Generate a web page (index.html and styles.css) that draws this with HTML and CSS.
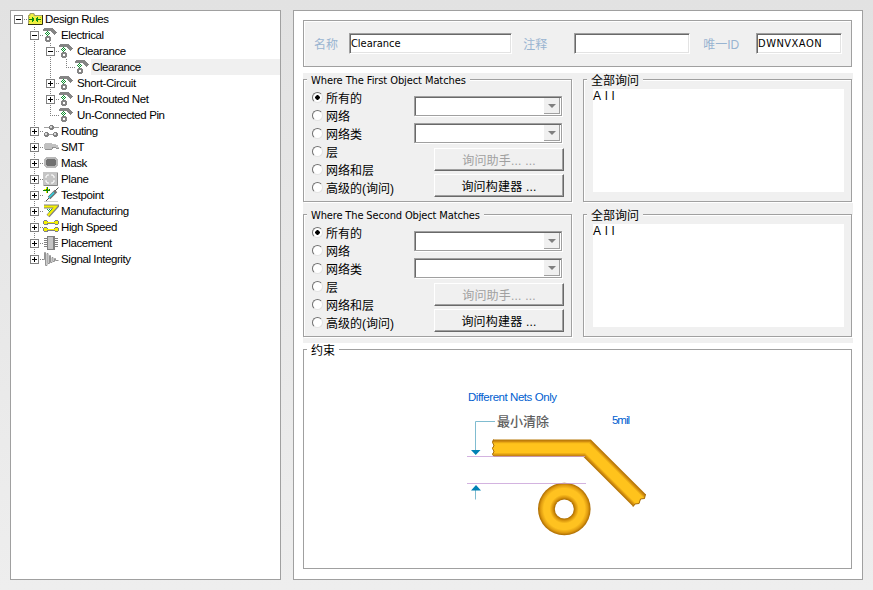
FILE: index.html
```html
<!DOCTYPE html>
<html lang="zh-CN">
<head>
    <meta charset="UTF-8">
    <title>Design Rules</title>
    <link rel="stylesheet" href="styles.css">
</head>
<body>

    <!-- Icon set -->
    <svg class="icon-defs" width="0" height="0" shape-rendering="crispEdges">
        <symbol id="ic-folder" viewBox="0 0 16 16">
            <path d="M1 14V4h1V3h1V2h4v1h1v1h7v10z" fill="#f0f040"/>
            <path d="M1.500 13V4.500H3V2.500h4V4.500h8" fill="none" stroke="#a0a070"/>
            <path d="M1 13.500h14.500V4" fill="none" stroke="#303010"/>
            <path d="M2 8.500h5M9 8.500h5" stroke="#008000"/>
            <path d="M5 6h1v1h1v3H6v1H5zM11 6h-1v1H9v3h1v1h1z" fill="#109010"/>
            <path d="M2 6h1v1H2zM13 6h1v1h-1zM2 10h1v1H2zM13 10h1v1h-1z" fill="#c0c010"/>
        </symbol>
        <symbol id="ic-clear" viewBox="0 0 16 16">
            <path d="M1 1h9v1h1v1h1v1h1v1h1v1h-1v1h-1v1h-1V7h-1V6H9V5H8V4H0V2h1z" fill="#858585"/>
            <path d="M4 4h1v1H4zM3 5h1v1H3zM5 5h1v1H5zM2 6h1v1H2zM4 6h1v1H4zM6 6h1v1H6zM3 7h1v1H3zM5 7h1v1H5zM4 8h1v1H4z" fill="#109030"/>
            <path d="M3 9h4v1h1v4H7v1H3v-1H2v-4h1zM4 11v2h2v-2z" fill="#858585" fill-rule="evenodd"/>
        </symbol>
        <symbol id="ic-routing" viewBox="0 0 16 16">
            <path d="M1 4h15v1H1zM4 11h8v1H4z" fill="#a0a0a0"/>
            <path d="M7 2h3v1h1v3h-1v1H7V6H6V3h1zM2 9h3v1h1v3H5v1H2v-1H1v-3h1zM11 9h3v1h1v3h-1v1h-3v-1h-1v-3h1z" fill="#808080"/>
            <path d="M7 3h2v2H7zM2 10h2v2H2zM11 10h2v2h-2z" fill="#d8d8d8"/>
        </symbol>
        <symbol id="ic-smt" viewBox="0 0 16 16">
            <path d="M2 4h7v1h4v1h2v2h1v2h-2V9h-2V8h-2v2H9v1H2v-1H1V5h1z" fill="#c0c0c0"/>
            <path d="M2 10.500h7M10 8.500h3M13 9.500h3M9.500 8v2" stroke="#909090"/>
        </symbol>
        <symbol id="ic-mask" viewBox="0 0 16 16">
            <path d="M3 2h10v1h1v1h1v7h-1v1h-1v1H3v-1H2v-1H1V4h1V3h1z" fill="#b8b8b8"/>
            <path d="M4 4h8v1h1v5h-1v1H4v-1H3V5h1z" fill="#707070"/>
        </symbol>
        <symbol id="ic-plane" viewBox="0 0 16 16">
            <rect x="0" y="1" width="15" height="14" fill="#c4c4c4"/>
            <path d="M14.500 2v12.500H1" fill="none" stroke="#888"/>
            <path d="M3 7V5h1V4h2M8 4h2v1h1v2M11 9v2h-1v1H8M6 12H4v-1H3V9" fill="none" stroke="#fff"/>
        </symbol>
        <symbol id="ic-test" viewBox="0 0 16 16">
            <path d="M3 0h2v2h2v2H5v2H3V4H0V3h3z" fill="#108010"/>
            <path d="M1 2h2v1H1zM3 0h1v2H3zM5 2h1v1H5zM3 4h1v2H3z" fill="#f0f000"/>
            <path d="M2.500 14.500L7 10M12 4l3.500-3.500" stroke="#505050" fill="none" shape-rendering="auto"/>
            <path d="M6 11l7-7" stroke="#707070" stroke-width="3.500" shape-rendering="auto"/>
            <path d="M6 10.500l5-5" stroke="#30d0e0" stroke-width="1.700" shape-rendering="auto"/>
            <path d="M1 14.500h14" stroke="#d0d0d0"/>
        </symbol>
        <symbol id="ic-manuf" viewBox="0 0 16 16">
            <path d="M1 3.500h12.500L5 13" fill="none" stroke="#808080" stroke-width="4" shape-rendering="auto"/>
            <path d="M1 3.500h12L5 12.500" fill="none" stroke="#f4f000" stroke-width="2" shape-rendering="auto"/>
            <path d="M4 6h1v1H4zM6 6h1v1H6zM8 6h1v1H8zM5 7h1v1H5zM7 7h1v1H7zM6 8h1v1H6z" fill="#20a050"/>
        </symbol>
        <symbol id="ic-speed" viewBox="0 0 16 16">
            <path d="M1 1h3v1h1v1h6V2h1V1h3v1h1v3h-1v1h-3V5H5v1H1V5H0V2h1zM1 8h3v1h1v1h6V9h1V8h3v1h1v3h-1v1h-3v-1H5v1H1v-1H0V9h1z" fill="#808080"/>
            <path d="M1 2h3v3H1zM12 2h3v3h-3zM1 9h3v3H1zM12 9h3v3h-3z" fill="#f4f000"/>
            <path d="M3 3.500h10M3 10.500h10" stroke="#f4f000"/>
        </symbol>
        <symbol id="ic-place" viewBox="0 0 16 16">
            <path d="M1 3.500h14M1 5.500h14M1 7.500h14M1 9.500h14M1 11.500h14" stroke="#808080"/>
            <rect x="4" y="1" width="8" height="14" fill="#808080"/>
            <rect x="5" y="2" width="5" height="12" fill="#c4c4c4"/>
        </symbol>
        <symbol id="ic-signal" viewBox="0 0 16 16">
            <path d="M0 8.500h1.500V1.500h1v13h1.500V2.500h1v10h1.500v-8h1v7h1.500v-5h1v4h1.500v-3h1v2h3" fill="none" stroke="#949494"/>
        </symbol>
    </svg>

    <div class="window">

        <!-- Rule tree -->
        <div class="panel tree">
            <div class="row"><i class="g root box minus"></i><svg class="icon"><use href="#ic-folder"/></svg><span>Design Rules</span></div>
            <div class="row"><i class="g"></i><i class="g v h box minus"></i><svg class="icon"><use href="#ic-clear"/></svg><span>Electrical</span></div>
            <div class="row"><i class="g"></i><i class="g v"></i><i class="g v h box minus"></i><svg class="icon"><use href="#ic-clear"/></svg><span>Clearance</span></div>
            <div class="row selected"><i class="g"></i><i class="g v"></i><i class="g v"></i><i class="g end h"></i><svg class="icon"><use href="#ic-clear"/></svg><span>Clearance</span></div>
            <div class="row"><i class="g"></i><i class="g v"></i><i class="g v h box plus"></i><svg class="icon"><use href="#ic-clear"/></svg><span>Short-Circuit</span></div>
            <div class="row"><i class="g"></i><i class="g v"></i><i class="g v h box plus"></i><svg class="icon"><use href="#ic-clear"/></svg><span>Un-Routed Net</span></div>
            <div class="row"><i class="g"></i><i class="g v"></i><i class="g end h"></i><svg class="icon"><use href="#ic-clear"/></svg><span>Un-Connected Pin</span></div>
            <div class="row"><i class="g"></i><i class="g v h box plus"></i><svg class="icon"><use href="#ic-routing"/></svg><span>Routing</span></div>
            <div class="row"><i class="g"></i><i class="g v h box plus"></i><svg class="icon"><use href="#ic-smt"/></svg><span>SMT</span></div>
            <div class="row"><i class="g"></i><i class="g v h box plus"></i><svg class="icon"><use href="#ic-mask"/></svg><span>Mask</span></div>
            <div class="row"><i class="g"></i><i class="g v h box plus"></i><svg class="icon"><use href="#ic-plane"/></svg><span>Plane</span></div>
            <div class="row"><i class="g"></i><i class="g v h box plus"></i><svg class="icon"><use href="#ic-test"/></svg><span>Testpoint</span></div>
            <div class="row"><i class="g"></i><i class="g v h box plus"></i><svg class="icon"><use href="#ic-manuf"/></svg><span>Manufacturing</span></div>
            <div class="row"><i class="g"></i><i class="g v h box plus"></i><svg class="icon"><use href="#ic-speed"/></svg><span>High Speed</span></div>
            <div class="row"><i class="g"></i><i class="g v h box plus"></i><svg class="icon"><use href="#ic-place"/></svg><span>Placement</span></div>
            <div class="row"><i class="g"></i><i class="g end h box plus"></i><svg class="icon"><use href="#ic-signal"/></svg><span>Signal Integrity</span></div>
        </div>

        <!-- Rule editor -->
        <div class="panel editor">
            <div class="header">
                <label class="name-label">名称</label>
                <input class="field name" type="text" value="Clearance">
                <label class="comment-label">注释</label>
                <input class="field comment" type="text">
                <label class="id-label">唯一ID</label>
                <input class="field id" type="text" value="DWNVXAON">
            </div>

            <div class="matches">
                <fieldset class="group">
                    <legend class="first">Where The First Object Matches</legend>
                    <div class="scope">
                        <div class="radios">
                            <label><i class="radio checked"></i>所有的</label>
                            <label><i class="radio"></i>网络</label>
                            <label><i class="radio"></i>网络类</label>
                            <label><i class="radio"></i>层</label>
                            <label><i class="radio"></i>网络和层</label>
                            <label><i class="radio"></i>高级的(询问)</label>
                        </div>
                        <div class="controls">
                            <div class="combo"><i class="arrow"></i></div>
                            <div class="combo"><i class="arrow"></i></div>
                            <button class="btn" disabled>询问助手... ...</button>
                            <button class="btn">询问构建器 ...</button>
                        </div>
                    </div>
                </fieldset>
                <fieldset class="group">
                    <legend>全部询问</legend>
                    <div class="query">All</div>
                </fieldset>
                <fieldset class="group">
                    <legend class="second">Where The Second Object Matches</legend>
                    <div class="scope">
                        <div class="radios">
                            <label><i class="radio checked"></i>所有的</label>
                            <label><i class="radio"></i>网络</label>
                            <label><i class="radio"></i>网络类</label>
                            <label><i class="radio"></i>层</label>
                            <label><i class="radio"></i>网络和层</label>
                            <label><i class="radio"></i>高级的(询问)</label>
                        </div>
                        <div class="controls">
                            <div class="combo"><i class="arrow"></i></div>
                            <div class="combo"><i class="arrow"></i></div>
                            <button class="btn" disabled>询问助手... ...</button>
                            <button class="btn">询问构建器 ...</button>
                        </div>
                    </div>
                </fieldset>
                <fieldset class="group">
                    <legend>全部询问</legend>
                    <div class="query">All</div>
                </fieldset>
            </div>

            <fieldset class="group constraints">
                <legend>约束</legend>
                <svg class="diagram" width="200" height="154" viewBox="463 386 200 154">
                    <defs>
                        <radialGradient id="pad" gradientUnits="userSpaceOnUse" cx="564.3" cy="509" r="26.300">
                            <stop offset="0.370" stop-color="#b07000"/>
                            <stop offset="0.440" stop-color="#d8940c"/>
                            <stop offset="0.550" stop-color="#ffc220"/>
                            <stop offset="0.780" stop-color="#ffc220"/>
                            <stop offset="0.900" stop-color="#e09c10"/>
                            <stop offset="1" stop-color="#a86800"/>
                        </radialGradient>
                        <clipPath id="torn">
                            <path d="M493.500 438H600L646 493l-1.500 5.500-4 .5-1.500 4.500-4 .5-2 3.500L580 460h-86.500l1-3-2-3 1.500-3-1.500-3 1.500-3-1.500-3z"/>
                        </clipPath>
                    </defs>
                    <!-- Track -->
                    <g clip-path="url(#torn)" fill="none">
                        <path d="M490 448.200H587.200L645 506" stroke="#b87808" stroke-width="17.600"/>
                        <path d="M490 448.200H587.200L645 506" stroke="#d08c10" stroke-width="15"/>
                        <path d="M490 448.200H587.200L645 506" stroke="#e8a814" stroke-width="12.500"/>
                        <path d="M490 448.200H587.200L645 506" stroke="#ffc31c" stroke-width="10"/>
                    </g>
                    <path d="M493.500 439.500l-1 3 1.500 3-1.500 3 1.500 3-1.500 3 2 2.500M645.500 494l-1 4.500-4 .5-1.500 4.500-4 .5-2 2.500" fill="none" stroke="#a87010"/>
                    <!-- Pad -->
                    <circle cx="564.3" cy="509" r="26.300" fill="url(#pad)"/>
                    <circle cx="564.3" cy="509" r="9.500" fill="#fff"/>
                    <!-- Dimension lines -->
                    <path d="M467 456.500h118M467 483.500h119" stroke="#c8a0d8" stroke-opacity="0.800"/>
                    <path d="M495 421.500H475.500V450M475.500 490v9.500" fill="none" stroke="#80bcd0"/>
                    <path d="M471 450h9.500l-4.750 5zM471 490.500h10l-5-5.500z" fill="#0082b4"/>
                    <text x="468" y="401" class="link" textLength="89">Different Nets Only</text>
                    <text x="497" y="426" class="caption">最小清除</text>
                    <text x="612" y="424" class="link" textLength="18">5mil</text>
                </svg>
            </fieldset>
        </div>
    </div>

</body>
</html>
```
FILE: styles.css
```css
*,
*::before,
*::after {
    box-sizing: border-box;
}

body {
    margin: 0;
    font-family: "Liberation Sans", "Noto Sans CJK SC", sans-serif;
    font-size: 12px;
    color: #000;
    background: linear-gradient(#e2e2e2, #eeeeee);
    height: 590px;
    overflow: hidden;
}

.icon-defs {
    display: block;
}

.window {
    display: flex;
    gap: 12px;
    padding: 10px;
    height: 590px;
}

.panel {
    height: 570px;
    background: #fff;
    border: 1px solid #a0a0a0;
}

/* Tree */
.tree {
    width: 271px;
}

.row {
    display: flex;
    height: 16px;
    line-height: 16px;
    font-size: 11.5px;
    letter-spacing: -0.4px;
    white-space: nowrap;
}

.row span {
    padding-left: 2px;
}

.row.selected span {
    flex: 1;
    padding-left: 1px;
    background: #f0f0f0;
}

.icon {
    width: 16px;
    height: 16px;
    flex: none;
}

/* Guide cells: dotted lines and expander boxes */
.g {
    position: relative;
    width: 16px;
    height: 16px;
    flex: none;
    background-repeat: no-repeat;
}

.g.v {
    background-image: repeating-linear-gradient(#808080 0 1px, transparent 1px 2px);
    background-size: 1px 16px;
    background-position: 7px 0;
}

.g.end {
    background-image: repeating-linear-gradient(#808080 0 1px, transparent 1px 2px);
    background-size: 1px 8px;
    background-position: 7px 0;
}

.g.h::before,
.g.root::before {
    content: "";
    position: absolute;
    left: 7px;
    top: 8px;
    width: 9px;
    height: 1px;
    background: repeating-linear-gradient(90deg, #808080 0 1px, transparent 1px 2px);
}

.g.box::after {
    content: "";
    position: absolute;
    left: 3px;
    top: 4px;
    width: 9px;
    height: 9px;
    border: 1px solid #808080;
    background: linear-gradient(#000, #000) center / 5px 1px no-repeat, #fff;
}

.g.plus::after {
    background: linear-gradient(#000, #000) center / 5px 1px no-repeat,
                linear-gradient(#000, #000) center / 1px 5px no-repeat, #fff;
}

/* Editor */
.editor {
    width: 570px;
    padding: 9px;
}

.header {
    display: flex;
    align-items: center;
    width: 549px;
    height: 47px;
    padding: 0 9px;
    background: #f0f0f0;
    border: 1px solid #a0a0a0;
    box-shadow: inset 1px 1px 0 #fff;
    color: #99b4d1;
}

.name-label {
    width: 36px;
    padding-left: 1px;
}

.comment-label {
    width: 62px;
    padding-left: 11px;
}

.id-label {
    width: 66px;
    padding-left: 13px;
}

.field {
    height: 21px;
    padding: 0 0 0 1px;
    border: 1px solid;
    border-color: #a0a0a0 #fff #fff #a0a0a0;
    border-radius: 0;
    box-shadow: inset 1px 1px 0 #696969, inset -1px -1px 0 #e3e3e3;
    background: #fff;
    outline: none;
    font: 11px "DejaVu Sans Condensed", "DejaVu Sans", sans-serif;
    font-stretch: condensed;
}

.field.name {
    width: 164px;
}

.field.comment {
    width: 116px;
}

.field.id {
    width: 86px;
    letter-spacing: 0.5px;
}

.matches {
    display: grid;
    grid-template-columns: 269px 269px;
    gap: 6px 11px;
    width: 550px;
    height: 270px;
    margin-top: 6px;
    background: #f0f0f0;
    align-content: start;
}

.group {
    min-width: 0;
    height: 129px;
    margin: 0;
    padding: 0 3px;
    border: 1px solid #a0a0a0;
    box-shadow: 1px 1px 0 #fff, inset 1px 1px 0 #fff;
}

legend {
    height: 13px;
    line-height: 16px;
    padding: 0 4px;
    white-space: nowrap;
    background: #f0f0f0;
}

legend.first,
legend.second {
    font-family: "DejaVu Sans Condensed", "DejaVu Sans", sans-serif;
    font-stretch: condensed;
    font-size: 11px;
    line-height: 15px;
    letter-spacing: -0.09px;
    width: 163px;
}

legend.second {
    letter-spacing: -0.14px;
    width: 177px;
}

.scope {
    display: flex;
    padding-top: 2px;
}

.radios {
    width: 107px;
    padding-left: 5px;
}

.radios label {
    display: flex;
    align-items: center;
    gap: 3px;
    height: 18px;
    line-height: 18px;
    padding-top: 3px;
    white-space: nowrap;
}

.radio {
    width: 11px;
    height: 11px;
    flex: none;
    margin-top: -3px;
    border: 1px solid;
    border-color: #707070 #e3e3e3 #e3e3e3 #707070;
    border-radius: 50%;
    background: #fff;
}

.radio.checked {
    background: radial-gradient(circle, #000 0 2px, #fff 2.5px);
}

.controls {
    padding-top: 8px;
}

.combo {
    display: flex;
    justify-content: flex-end;
    width: 148px;
    height: 20px;
    margin-bottom: 7px;
    padding: 1px;
    background: #fff;
    border: 1px solid #a0a0a0;
    box-shadow: inset 1px 1px 0 #696969, 1px 1px 0 #fff;
}

.combo + .combo {
    margin-bottom: 5px;
}

.arrow {
    display: flex;
    align-items: center;
    justify-content: center;
    width: 16px;
    background: #f0f0f0;
    border-right: 1px solid #a0a0a0;
    border-bottom: 1px solid #a0a0a0;
}

.arrow::before {
    content: "";
    border: 4px solid transparent;
    border-top-color: #808080;
    border-bottom: 0;
}

.btn {
    display: block;
    width: 130px;
    height: 23px;
    margin: 0 0 3px 20px;
    padding: 0;
    border: 1px solid;
    border-color: #fff #696969 #696969 #fff;
    border-radius: 0;
    box-shadow: inset -1px -1px 0 #a0a0a0;
    background: #f0f0f0;
    color: #000;
    font: 12px "Liberation Sans", "Noto Sans CJK SC", sans-serif;
    letter-spacing: 0.2px;
}

.btn:disabled {
    color: #a0a0a0;
}

.query {
    width: 251px;
    height: 103px;
    margin: 3px 0 0 6px;
    background: #fff;
    font: 12px/14px "Liberation Sans Narrow", "Liberation Sans", sans-serif;
    letter-spacing: 4px;
}

/* Constraints */
.constraints {
    width: 549px;
    height: 226px;
    box-shadow: none;
}

.constraints legend {
    background: #fff;
}

.diagram {
    display: block;
    margin: 30px 0 0 156px;
}

.link {
    font-size: 11.5px;
    fill: #0060d0;
}

.caption {
    font: 500 13px "Noto Sans CJK SC", sans-serif;
    fill: #606060;
}
```
